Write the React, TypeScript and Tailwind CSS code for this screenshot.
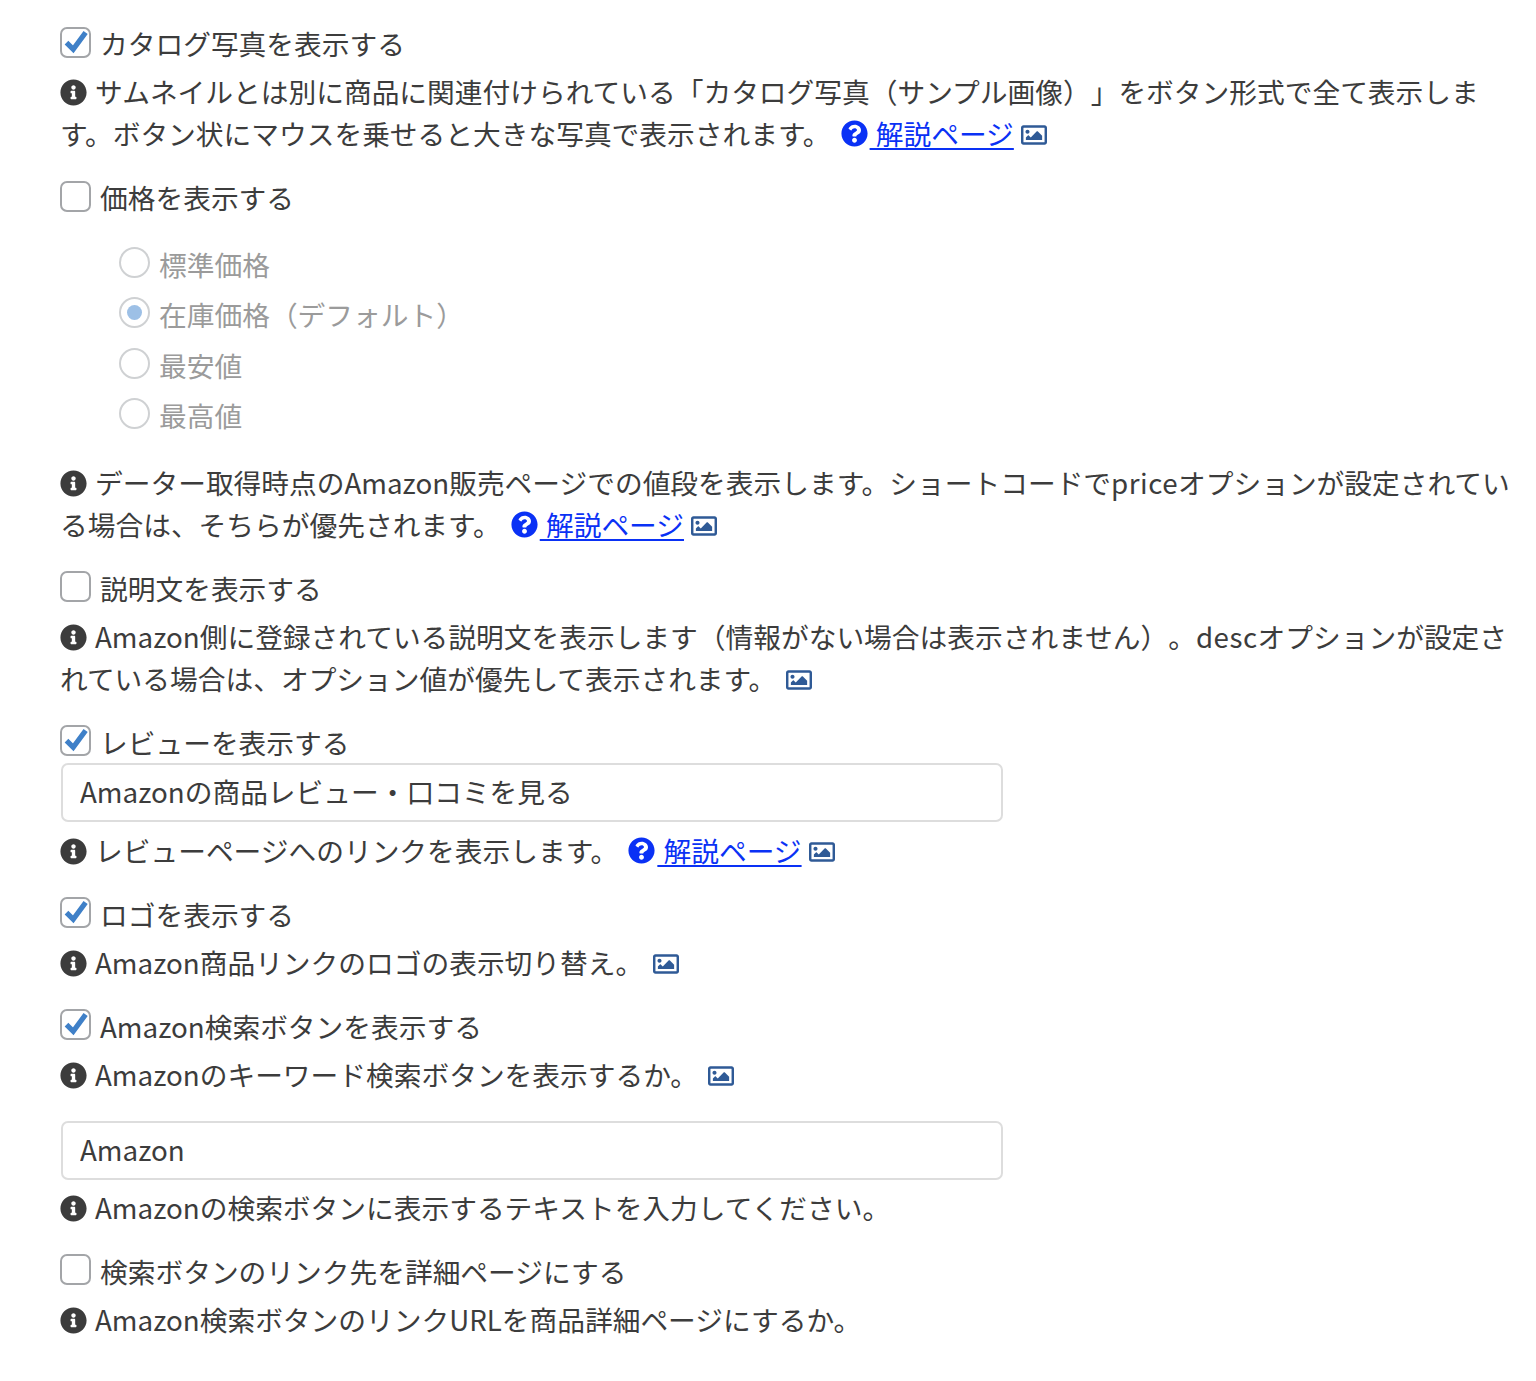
import { FaInfoCircle, FaQuestionCircle, FaRegImage } from "react-icons/fa";

/* ---------- reusable parts ---------- */
function Check({ checked, label, top = false }: { checked?: boolean; label: string; top?: boolean }) {
  return (
    <label className="flex h-[42px] items-center gap-[9px]">
      <span className="relative mt-[-3px] block h-[31px] w-[31px] shrink-0 rounded-[7px] border-2 border-[#a3a5a8] bg-white">
        {checked && (
          <svg viewBox="0 0 24 24" className="absolute top-[-1px] left-[0px] h-[27px] w-[27px]" fill="none">
            <path d="M4 13l6 6L21 4" stroke="#3f80c8" strokeWidth="4.6" />
          </svg>
        )}
      </span>
      <span className={top ? "mt-[-2px]" : "mt-[-1px]"}>{label}</span>
    </label>
  );
}

function Radio({ checked, label }: { checked?: boolean; label: string }) {
  return (
    <label className="flex h-[50.5px] items-center gap-[9px] text-[#9b9b9b]">
      <span className="mt-[-4px] flex h-[31px] w-[31px] shrink-0 items-center justify-center rounded-full border-2 border-[#cfd1d3] bg-white">
        {checked && <span className="h-[15px] w-[15px] rounded-full bg-[#9dc0e6]" />}
      </span>
      <span className="mt-[-1px]">{label}</span>
    </label>
  );
}

function Info() {
  return <FaInfoCircle className="mr-[8px] inline-block h-[27px] w-[27px] align-[-3px] text-[#3c3c3c]" />;
}

function Help() {
  return (
    <a className="ml-[10px] text-[#0a31f5] underline underline-offset-[3px]">
      <FaQuestionCircle className="mr-[2px] inline-block h-[27px] w-[27px] align-[-2px] text-[#0a31f5]" /> 解説ページ
    </a>
  );
}

function Pic({ gap = "ml-[7px]" }: { gap?: string }) {
  return <FaRegImage className={`${gap} inline-block h-[26px] w-[26px] align-[-3px] text-[#2f5a96]`} />;
}

function Desc({ children, className = "" }: { children: React.ReactNode; className?: string }) {
  return <p className={`leading-[42px] ${className}`}>{children}</p>;
}

function TextBox({ value }: { value: string }) {
  return (
    <input
      readOnly
      value={value}
      className="block h-[59px] w-[942px] ml-[1px] rounded-[7px] border-2 border-[#dddddd] bg-white px-[17px] pb-[3px] text-[#3c3c3c] outline-none"
    />
  );
}

/* ---------- page ---------- */
export default function App() {
  return (
    <div className="min-h-[1381px] bg-white pt-[23px] pl-[60px] pr-[26px] text-[27.72px] leading-[42px] text-[#3c3c3c] [text-spacing-trim:space-all] [font-family:'Noto_Sans_CJK_JP',sans-serif]">
      <Check top checked label="カタログ写真を表示する" />
      <Desc className="mt-[5px]">
        <Info />
        サムネイルとは別に商品に関連付けられている「カタログ写真（サンプル画像）」をボタン形式で全て表示します。ボタン状にマウスを乗せると大きな写真で表示されます。
        <Help />
        <Pic />
      </Desc>

      <div className="mt-[23px]">
        <Check top label="価格を表示する" />
      </div>
      <div className="mt-[20px] pl-[59px]">
        <Radio label="標準価格" />
        <Radio checked label="在庫価格（デフォルト）" />
        <Radio label="最安値" />
        <Radio label="最高値" />
      </div>
      <Desc className="mt-[20px]">
        <Info />
        データー取得時点のAmazon販売ページでの値段を表示します。ショートコードで<span className="tracking-[0.5px]">price</span>オプションが設定されている場合は、そちらが優先されます。
        <Help />
        <Pic />
      </Desc>

      <div className="mt-[22px]">
        <Check label="説明文を表示する" />
      </div>
      <Desc className="mt-[6px]">
        <Info />
        Amazon側に登録されている説明文を表示します（情報がない場合は表示されません）。<span className="tracking-[0.5px]">desc</span>オプションが設定されている場合は、オプション値が優先して表示されます。
        <Pic gap="ml-[10px]" />
      </Desc>

      <div className="mt-[22px]">
        <Check checked label="レビューを表示する" />
      </div>
      <TextBox value="Amazonの商品レビュー・口コミを見る" />
      <Desc className="mt-[7px]">
        <Info />
        レビューページへのリンクを表示します。
        <Help />
        <Pic />
      </Desc>

      <div className="mt-[22px]">
        <Check checked label="ロゴを表示する" />
      </div>
      <Desc className="mt-[6px]">
        <Info />
        Amazon商品リンクのロゴの表示切り替え。
        <Pic gap="ml-[10px]" />
      </Desc>

      <div className="mt-[22px]">
        <Check checked label="Amazon検索ボタンを表示する" />
      </div>
      <Desc className="mt-[6px]">
        <Info />
        Amazonのキーワード検索ボタンを表示するか。
        <Pic gap="ml-[10px]" />
      </Desc>

      <div className="mt-[26px]">
        <TextBox value="Amazon" />
      </div>
      <Desc className="mt-[6px]">
        <Info />
        Amazonの検索ボタンに表示するテキストを入力してください。
      </Desc>

      <div className="mt-[22px]">
        <Check label="検索ボタンのリンク先を詳細ページにする" />
      </div>
      <Desc className="mt-[6px]">
        <Info />
        Amazon検索ボタンのリンクURLを商品詳細ページにするか。
      </Desc>
    </div>
  );
}
